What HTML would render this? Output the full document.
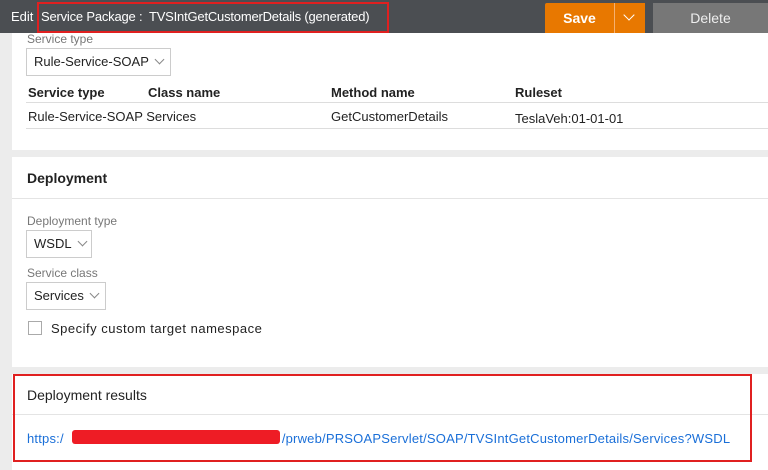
<!DOCTYPE html>
<html><head><style>
body{margin:0;width:768px;height:470px;background:#ececec;font-family:"Liberation Sans",sans-serif;position:relative;overflow:hidden;color:#222}
.a{position:absolute}
.hdr{left:0;top:0;width:768px;height:33px;background:#4b4e52}
.panel{background:#fff;left:12px;width:756px}
.sel{border:1px solid #ccc;background:#fff;font-size:13px;height:24px;line-height:24px;padding-left:7px;box-sizing:border-box}
.lbl{font-size:12px;color:#777}
.b{font-weight:bold;font-size:13px}
.t{font-size:13px}
.chev{display:inline-block;width:6px;height:6px;border-right:1px solid #888;border-bottom:1px solid #888;transform:rotate(45deg);margin-left:7px;position:relative;top:-3px}
</style></head><body>
<div class="a hdr"></div>
<div class="a" style="left:11px;top:9px;color:#fff;font-size:13px">Edit</div>
<div class="a" style="left:41px;top:9px;color:#fff;font-size:13px;letter-spacing:-0.2px">Service Package :&nbsp; TVSIntGetCustomerDetails (generated)</div>
<div class="a" style="left:37px;top:2px;width:348px;height:27px;border:2px solid #e02020"></div>
<div class="a" style="left:545px;top:3px;width:69px;height:30px;background:#e87800;border-radius:2px 0 0 0;color:#fff;font-weight:bold;font-size:14px;text-align:center;line-height:30px">Save</div>
<div class="a" style="left:614px;top:3px;width:1px;height:30px;background:#f5b070"></div>
<div class="a" style="left:615px;top:3px;width:30px;height:30px;background:#e87800"></div>
<div class="a" style="left:625px;top:11px;width:7px;height:7px;border-right:1.5px solid #fff;border-bottom:1.5px solid #fff;transform:rotate(45deg)"></div>
<div class="a" style="left:653px;top:3px;width:115px;height:30px;background:#777;color:#eee;font-size:14px;text-align:center;line-height:30px">Delete</div>

<div class="a panel" style="top:33px;height:117px"></div>
<div class="a lbl" style="left:27px;top:32px">Service type</div>
<div class="a sel" style="left:26px;top:48px;width:145px;height:28px;line-height:26px">Rule-Service-SOAP<span class="chev"></span></div>
<div class="a b" style="left:28px;top:85px">Service type</div>
<div class="a b" style="left:148px;top:85px">Class name</div>
<div class="a b" style="left:331px;top:85px">Method name</div>
<div class="a b" style="left:515px;top:85px">Ruleset</div>
<div class="a" style="left:26px;top:102px;width:742px;height:1px;background:#ddd"></div>
<div class="a t" style="left:28px;top:109px">Rule-Service-SOAP Services</div>
<div class="a t" style="left:331px;top:109px">GetCustomerDetails</div>
<div class="a t" style="left:515px;top:111px">TeslaVeh:01-01-01</div>
<div class="a" style="left:26px;top:128px;width:742px;height:1px;background:#ddd"></div>

<div class="a panel" style="top:157px;height:210px"></div>
<div class="a b" style="left:27px;top:170px;font-size:14px">Deployment</div>
<div class="a" style="left:12px;top:198px;width:756px;height:1px;background:#e4e4e4"></div>
<div class="a lbl" style="left:27px;top:214px">Deployment type</div>
<div class="a sel" style="left:26px;top:230px;width:66px;height:28px;line-height:26px">WSDL<span class="chev"></span></div>
<div class="a lbl" style="left:27px;top:266px">Service class</div>
<div class="a sel" style="left:26px;top:282px;width:80px;height:28px;line-height:26px">Services<span class="chev"></span></div>
<div class="a" style="left:28px;top:321px;width:12px;height:12px;border:1px solid #aaa"></div>
<div class="a t" style="left:51px;top:321px;letter-spacing:0.5px">Specify custom target namespace</div>

<div class="a panel" style="top:374px;height:96px"></div>
<div class="a" style="left:27px;top:387px;font-size:14px">Deployment results</div>
<div class="a" style="left:12px;top:414px;width:756px;height:1px;background:#e4e4e4"></div>
<div class="a" style="left:27px;top:431px;font-size:13px;color:#1a6fd8;letter-spacing:0.2px">https:/<span style="display:inline-block;width:218px"></span>/prweb/PRSOAPServlet/SOAP/TVSIntGetCustomerDetails/Services?WSDL</div>
<div class="a" style="left:72px;top:430px;width:208px;height:14px;background:#ee1c25;border-radius:3px"></div>
<div class="a" style="left:13px;top:374px;width:735px;height:84px;border:2px solid #e02020"></div>
</body></html>
